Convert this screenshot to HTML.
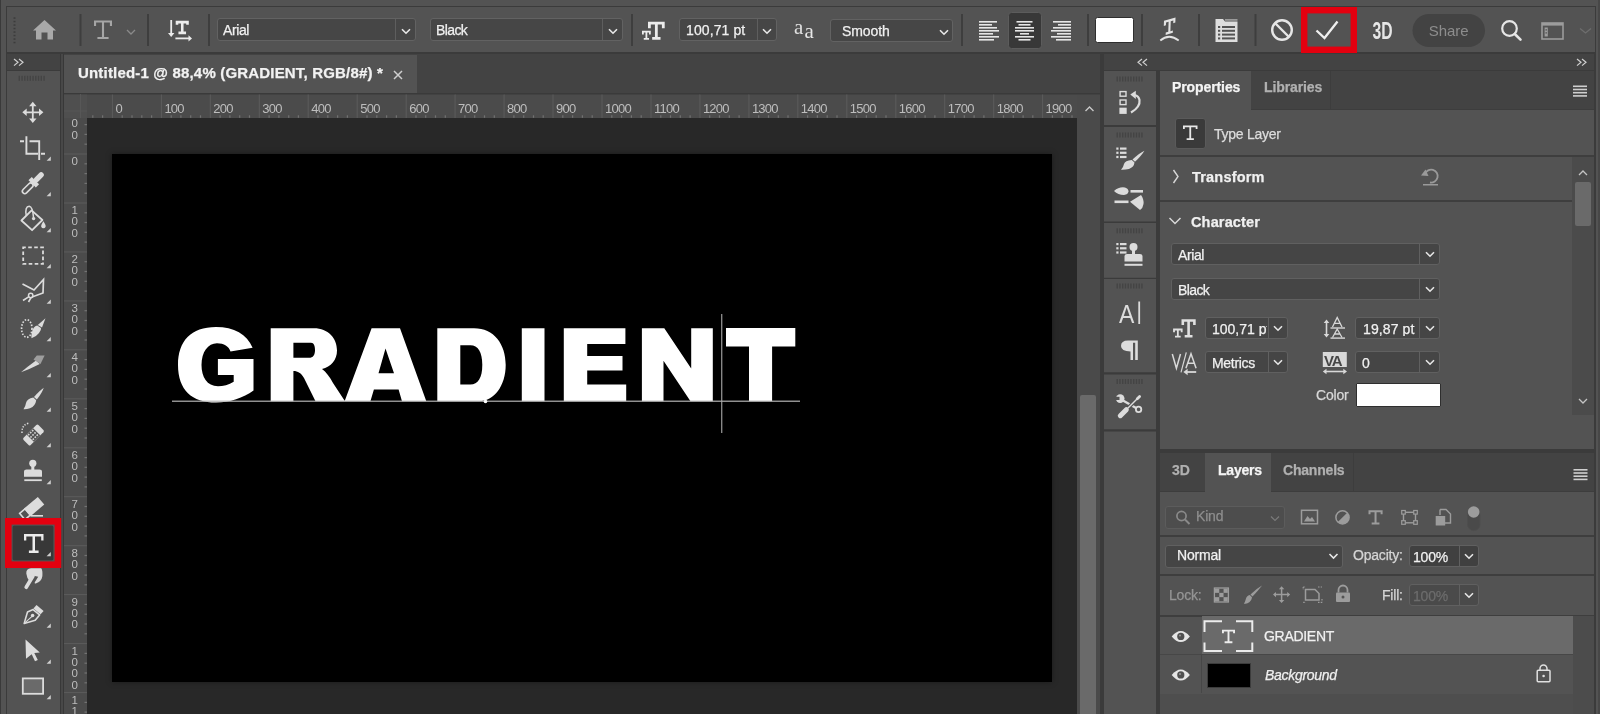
<!DOCTYPE html>
<html><head><meta charset="utf-8">
<style>
*{margin:0;padding:0;box-sizing:border-box}
html,body{width:1600px;height:714px;overflow:hidden;background:#535353;font-family:"Liberation Sans",sans-serif;color:#e0e0e0}
.a{position:absolute}
.dd{position:absolute;background:#464646;border:1px solid #626262;border-radius:3px}
.sep{position:absolute;width:2px;background:#3e3e3e}
.t{position:absolute;white-space:nowrap;line-height:1}
svg.a{overflow:visible}
.t,svg text{will-change:transform}
.t{-webkit-text-stroke:0.25px currentColor}
</style></head><body>
<div class="a" style="left:0;top:0;width:1px;height:714px;background:#3a3a3a"></div>
<div class="a" style="left:6px;top:6px;width:1590px;height:48px;background:#535353;border:1px solid #3b3b3b;border-bottom-width:2px"></div>
<div class="a" style="left:7px;top:54px;width:53px;height:16px;background:#434343"></div>
<div class="a" style="left:1104px;top:54px;width:490px;height:16px;background:#434343"></div>
<div class="a" style="left:6px;top:54px;width:1px;height:660px;background:#3b3b3b"></div>
<div class="a" style="left:60px;top:54px;width:4px;height:660px;background:#3b3b3b;border-left:1.5px solid #383838;border-right:0.8px solid #383838;background:#484848"></div>
<div class="a" style="left:1100px;top:54px;width:4px;height:660px;background:#3b3b3b"></div>
<div class="a" style="left:1156px;top:70px;width:4px;height:644px;background:#3b3b3b"></div>
<div class="a" style="left:1104px;top:70px;width:490px;height:1px;background:#3b3b3b"></div>
<div class="a" style="left:7px;top:70px;width:53px;height:1px;background:#3b3b3b"></div>
<div class="a" style="left:1594px;top:54px;width:2px;height:660px;background:#3b3b3b"></div>
<div class="a" style="left:1598px;top:0;width:2px;height:714px;background:#474747"></div>
<!-- DOCUMENT AREA -->
<div class="a" style="left:64px;top:54px;width:1036px;height:40px;background:#434343"></div>
<div class="a" style="left:64px;top:55px;width:353px;height:38px;background:#535353"></div>
<div class="a" style="left:64px;top:93px;width:1036px;height:1px;background:#3a3a3a"></div>
<div class="a" style="left:64px;top:94px;width:1013px;height:24px;background:#4b4b4b"></div>
<div class="a" style="left:64px;top:94px;width:23px;height:620px;background:#4b4b4b"></div>
<div class="a" style="left:87px;top:118px;width:990px;height:596px;background:#282828"></div>
<div class="a" style="left:1077px;top:94px;width:23px;height:620px;background:#4a4a4a"></div>
<div class="a" style="left:1080px;top:395px;width:16px;height:319px;background:#6a6a6a;border-radius:2px 2px 0 0"></div>
<div class="a" style="left:112px;top:154px;width:940px;height:528px;background:#000;box-shadow:0 0 6px rgba(0,0,0,.35)"></div>
<svg class="a" style="left:0;top:0" width="1600" height="60">
<rect x="13.5" y="17.3" width="2" height="1.5" fill="#3c3c3c"/>
<rect x="13.5" y="20.8" width="2" height="1.5" fill="#3c3c3c"/>
<rect x="13.5" y="24.3" width="2" height="1.5" fill="#3c3c3c"/>
<rect x="13.5" y="27.8" width="2" height="1.5" fill="#3c3c3c"/>
<rect x="13.5" y="31.3" width="2" height="1.5" fill="#3c3c3c"/>
<rect x="13.5" y="34.8" width="2" height="1.5" fill="#3c3c3c"/>
<rect x="13.5" y="38.3" width="2" height="1.5" fill="#3c3c3c"/>
<rect x="13.5" y="41.8" width="2" height="1.5" fill="#3c3c3c"/>
<path d="M44.5 20 L56 30.5 L53 30.5 L53 39.5 L47.5 39.5 L47.5 32.5 L41.5 32.5 L41.5 39.5 L36 39.5 L36 30.5 L33 30.5 Z" fill="#a9a9a9"/>
<rect x="79.5" y="14" width="2" height="32" fill="#3e3e3e"/>
<rect x="147" y="14" width="2" height="32" fill="#3e3e3e"/>
<rect x="208" y="14" width="2" height="32" fill="#3e3e3e"/>
<rect x="631" y="14" width="2" height="32" fill="#3e3e3e"/>
<rect x="961" y="14" width="2" height="32" fill="#3e3e3e"/>
<rect x="1087" y="14" width="2" height="32" fill="#3e3e3e"/>
<rect x="1141" y="14" width="2" height="32" fill="#3e3e3e"/>
<rect x="1198" y="14" width="2" height="32" fill="#3e3e3e"/>
<rect x="1254.5" y="14" width="2" height="32" fill="#3e3e3e"/>
<path d="M94 20.5H112V25.96H109.9V22.6H104.05V36.9H108.58V39H97.42V36.9H101.95V22.6H96.1V25.96H94Z" fill="#a6a6a6"/>
<path d="M127 30 L131 34 L135 30" stroke="#8a8a8a" stroke-width="1.3" fill="none"/>
<rect x="170.3" y="20" width="1.8" height="14" fill="#ececec"/><path d="M168 33 L174.4 33 L171.2 37 Z" fill="#ececec"/>
<path d="M175.7 20.8H188.8V24.700000000000003H186.20000000000002V23.400000000000002H183.55V31.6H186.049V34.2H178.451V31.6H180.95V23.400000000000002H178.29999999999998V24.700000000000003H175.7Z" fill="#ececec"/>
<rect x="175.4" y="37.5" width="14" height="1.8" fill="#ececec"/><path d="M188.5 35.3 L192 38.4 L188.5 41.5 Z" fill="#ececec"/>
<path d="M648 21.8H664.7V28.240000000000002H661.9000000000001V24.6H657.75V37.0H660.5250000000001V39.8H652.175V37.0H654.95V24.6H650.8V28.240000000000002H648Z" fill="#ececec"/>
<path d="M642 30.8H650.8V34.4H649.0V32.6H647.3V38.0H649.04V39.8H643.76V38.0H645.5V32.6H643.8V34.4H642Z" fill="#ececec"/>
<rect x="1008.5" y="12.5" width="33" height="36" rx="3" fill="#383838" stroke="#5c5c5c" stroke-width="1"/>
<rect x="979" y="21.0" width="18" height="1.6" fill="#e6e6e6"/><rect x="979" y="24.0" width="13" height="1.6" fill="#e6e6e6"/><rect x="979" y="27.0" width="18" height="1.6" fill="#e6e6e6"/><rect x="979" y="30.0" width="20" height="1.6" fill="#e6e6e6"/><rect x="979" y="33.0" width="14" height="1.6" fill="#e6e6e6"/><rect x="979" y="36.0" width="20" height="1.6" fill="#e6e6e6"/><rect x="979" y="39.0" width="15" height="1.6" fill="#e6e6e6"/>
<rect x="1016.5" y="21.0" width="16" height="1.6" fill="#e6e6e6"/><rect x="1018.5" y="24.0" width="12" height="1.6" fill="#e6e6e6"/><rect x="1015" y="27.0" width="19" height="1.6" fill="#e6e6e6"/><rect x="1015" y="30.0" width="19" height="1.6" fill="#e6e6e6"/><rect x="1020" y="33.0" width="9" height="1.6" fill="#e6e6e6"/><rect x="1015" y="36.0" width="19" height="1.6" fill="#e6e6e6"/><rect x="1018.5" y="39.0" width="12" height="1.6" fill="#e6e6e6"/>
<rect x="1053" y="21.0" width="18" height="1.6" fill="#e6e6e6"/><rect x="1058" y="24.0" width="13" height="1.6" fill="#e6e6e6"/><rect x="1053" y="27.0" width="18" height="1.6" fill="#e6e6e6"/><rect x="1051" y="30.0" width="20" height="1.6" fill="#e6e6e6"/><rect x="1057" y="33.0" width="14" height="1.6" fill="#e6e6e6"/><rect x="1051" y="36.0" width="20" height="1.6" fill="#e6e6e6"/><rect x="1056" y="39.0" width="15" height="1.6" fill="#e6e6e6"/>
<rect x="1095.5" y="17.5" width="38" height="25" rx="2" fill="#ffffff" stroke="#2e2e2e" stroke-width="1"/>
<path transform="translate(1169.5 26.5) rotate(-16) skewX(-18) translate(-1169.5 -26.5)" d="M1163.5 19.5H1175.5V24.34H1173.3V21.7H1170.6V31.3H1173.22V33.5H1165.78V31.3H1168.4V21.7H1165.7V24.34H1163.5Z" fill="#e3e3e3"/>
<path d="M1160.3 40.5 Q1169 33 1178.7 40.5" stroke="#e3e3e3" stroke-width="1.8" fill="none"/>
<path d="M1215.5 19 L1223 19 L1225 21.5 L1237.5 21.5 L1237.5 42 L1215.5 42 Z" fill="#dedede"/>
<rect x="1225" y="19" width="12.5" height="1.8" fill="#9a9a9a"/>
<rect x="1218" y="26.0" width="2.2" height="2" fill="#535353"/><rect x="1222" y="26.0" width="13" height="2" fill="#535353"/>
<rect x="1218" y="29.8" width="2.2" height="2" fill="#535353"/><rect x="1222" y="29.8" width="13" height="2" fill="#535353"/>
<rect x="1218" y="33.6" width="2.2" height="2" fill="#535353"/><rect x="1222" y="33.6" width="13" height="2" fill="#535353"/>
<rect x="1218" y="37.4" width="2.2" height="2" fill="#535353"/><rect x="1222" y="37.4" width="13" height="2" fill="#535353"/>
<circle cx="1282" cy="30" r="9.8" stroke="#e6e6e6" stroke-width="2.4" fill="none"/><path d="M1275.5 23.5 L1288.5 36.5" stroke="#e6e6e6" stroke-width="2.4"/>
<rect x="1304.2" y="10.2" width="49.6" height="39.6" fill="none" stroke="#e3000f" stroke-width="6.4"/>
<path d="M1316.5 30.5 L1324.5 38 L1337.5 21.5" stroke="#f0f0f0" stroke-width="2.3" fill="none"/>
<text x="0" y="0" font-family="Liberation Sans" font-weight="bold" font-size="24.5" fill="#e6e6e6" transform="translate(1372.5 39.2) scale(0.64 1)">3D</text>
<rect x="1412.5" y="14" width="72.5" height="33" rx="16.5" fill="#434343"/>
<text x="1448.7" y="35.5" text-anchor="middle" font-family="Liberation Sans" font-size="15" fill="#8d8d8d">Share</text>
<circle cx="1509.5" cy="28.5" r="7.3" stroke="#e6e6e6" stroke-width="2.2" fill="none"/><path d="M1514.8 34 L1520.5 39.7" stroke="#e6e6e6" stroke-width="2.6" stroke-linecap="round"/>
<rect x="1542" y="23" width="21" height="16" stroke="#9c9c9c" stroke-width="1.6" fill="none"/><rect x="1542" y="23" width="21" height="2.6" fill="#9c9c9c"/><rect x="1544.6" y="27.5" width="3.2" height="9" fill="#9c9c9c"/><rect x="1545.4" y="29.3" width="1.6" height="1.2" fill="#535353"/><rect x="1545.4" y="32.3" width="1.6" height="1.2" fill="#535353"/>
<path d="M1580 28.5 L1585.5 33 L1591 28.5" stroke="#6e6e6e" stroke-width="1.3" fill="none"/>
</svg>
<div class="dd" style="left:217px;top:18px;width:199px;height:23px"></div><div class="a" style="left:395px;top:19px;width:1px;height:21px;background:#5e5e5e"></div><div class="t" style="left:223px;top:23.0px;font-size:14px;letter-spacing:-0.4px;color:#f0f0f0">Arial</div><svg class="a" style="left:400.5px;top:28px" width="10" height="7"><path d="M1 1.2 L5 5.2 L9 1.2" stroke="#e8e8e8" stroke-width="1.6" fill="none"/></svg>
<div class="dd" style="left:430px;top:18px;width:193px;height:23px"></div><div class="a" style="left:602px;top:19px;width:1px;height:21px;background:#5e5e5e"></div><div class="t" style="left:436px;top:23.0px;font-size:14px;letter-spacing:-0.6px;color:#f0f0f0">Black</div><svg class="a" style="left:607.5px;top:28px" width="10" height="7"><path d="M1 1.2 L5 5.2 L9 1.2" stroke="#e8e8e8" stroke-width="1.6" fill="none"/></svg>
<div class="dd" style="left:679px;top:18px;width:98px;height:23px"></div><div class="a" style="left:757px;top:19px;width:1px;height:21px;background:#5e5e5e"></div><div class="t" style="left:686px;top:23.0px;font-size:14px;letter-spacing:0.1px;color:#f0f0f0">100,71 pt</div><svg class="a" style="left:762px;top:28px" width="10" height="7"><path d="M1 1.2 L5 5.2 L9 1.2" stroke="#e8e8e8" stroke-width="1.6" fill="none"/></svg>
<div class="dd" style="left:830px;top:19px;width:123px;height:23px"></div><div class="t" style="left:842px;top:24.0px;font-size:14px;letter-spacing:-0.1px;color:#f0f0f0">Smooth</div><svg class="a" style="left:938.5px;top:29px" width="10" height="7"><path d="M1 1.2 L5 5.2 L9 1.2" stroke="#e8e8e8" stroke-width="1.6" fill="none"/></svg>
<svg class="a" style="left:0;top:0" width="900" height="60"><text x="794" y="33.7" font-family="Liberation Serif" font-size="21" fill="#e0e0e0">a</text><text x="804.6" y="38" font-family="Liberation Serif" font-size="21" fill="#e8e8e8">a</text></svg><svg class="a" style="left:0;top:0" width="1600" height="714">
<path d="M1142 59 L1138 62.3 L1142 65.6 M1147 59 L1143 62.3 L1147 65.6" stroke="#d0d0d0" stroke-width="1.2" fill="none"/>
<path d="M1577 59 L1581 62.3 L1577 65.6 M1582 59 L1586 62.3 L1582 65.6" stroke="#d0d0d0" stroke-width="1.2" fill="none"/>
<rect x="1104" y="125" width="52" height="2" fill="#3b3b3b"/>
<rect x="1104" y="221.5" width="52" height="1.5" fill="#3b3b3b"/>
<rect x="1104" y="277.8" width="52" height="1.1999999999999886" fill="#3b3b3b"/>
<rect x="1104" y="372.3" width="52" height="2.1999999999999886" fill="#3b3b3b"/>
<rect x="1104" y="429.3" width="52" height="2.1999999999999886" fill="#3b3b3b"/>
<rect x="1116.50" y="76.5" width="1.4" height="5" fill="#444444"/><rect x="1119.25" y="76.5" width="1.4" height="5" fill="#444444"/><rect x="1122.00" y="76.5" width="1.4" height="5" fill="#444444"/><rect x="1124.75" y="76.5" width="1.4" height="5" fill="#444444"/><rect x="1127.50" y="76.5" width="1.4" height="5" fill="#444444"/><rect x="1130.25" y="76.5" width="1.4" height="5" fill="#444444"/><rect x="1133.00" y="76.5" width="1.4" height="5" fill="#444444"/><rect x="1135.75" y="76.5" width="1.4" height="5" fill="#444444"/><rect x="1138.50" y="76.5" width="1.4" height="5" fill="#444444"/><rect x="1141.25" y="76.5" width="1.4" height="5" fill="#444444"/>
<rect x="1116.50" y="132.5" width="1.4" height="5" fill="#444444"/><rect x="1119.25" y="132.5" width="1.4" height="5" fill="#444444"/><rect x="1122.00" y="132.5" width="1.4" height="5" fill="#444444"/><rect x="1124.75" y="132.5" width="1.4" height="5" fill="#444444"/><rect x="1127.50" y="132.5" width="1.4" height="5" fill="#444444"/><rect x="1130.25" y="132.5" width="1.4" height="5" fill="#444444"/><rect x="1133.00" y="132.5" width="1.4" height="5" fill="#444444"/><rect x="1135.75" y="132.5" width="1.4" height="5" fill="#444444"/><rect x="1138.50" y="132.5" width="1.4" height="5" fill="#444444"/><rect x="1141.25" y="132.5" width="1.4" height="5" fill="#444444"/>
<rect x="1116.50" y="228.3" width="1.4" height="5" fill="#444444"/><rect x="1119.25" y="228.3" width="1.4" height="5" fill="#444444"/><rect x="1122.00" y="228.3" width="1.4" height="5" fill="#444444"/><rect x="1124.75" y="228.3" width="1.4" height="5" fill="#444444"/><rect x="1127.50" y="228.3" width="1.4" height="5" fill="#444444"/><rect x="1130.25" y="228.3" width="1.4" height="5" fill="#444444"/><rect x="1133.00" y="228.3" width="1.4" height="5" fill="#444444"/><rect x="1135.75" y="228.3" width="1.4" height="5" fill="#444444"/><rect x="1138.50" y="228.3" width="1.4" height="5" fill="#444444"/><rect x="1141.25" y="228.3" width="1.4" height="5" fill="#444444"/>
<rect x="1116.50" y="283.5" width="1.4" height="5" fill="#444444"/><rect x="1119.25" y="283.5" width="1.4" height="5" fill="#444444"/><rect x="1122.00" y="283.5" width="1.4" height="5" fill="#444444"/><rect x="1124.75" y="283.5" width="1.4" height="5" fill="#444444"/><rect x="1127.50" y="283.5" width="1.4" height="5" fill="#444444"/><rect x="1130.25" y="283.5" width="1.4" height="5" fill="#444444"/><rect x="1133.00" y="283.5" width="1.4" height="5" fill="#444444"/><rect x="1135.75" y="283.5" width="1.4" height="5" fill="#444444"/><rect x="1138.50" y="283.5" width="1.4" height="5" fill="#444444"/><rect x="1141.25" y="283.5" width="1.4" height="5" fill="#444444"/>
<rect x="1116.50" y="379.0" width="1.4" height="5" fill="#444444"/><rect x="1119.25" y="379.0" width="1.4" height="5" fill="#444444"/><rect x="1122.00" y="379.0" width="1.4" height="5" fill="#444444"/><rect x="1124.75" y="379.0" width="1.4" height="5" fill="#444444"/><rect x="1127.50" y="379.0" width="1.4" height="5" fill="#444444"/><rect x="1130.25" y="379.0" width="1.4" height="5" fill="#444444"/><rect x="1133.00" y="379.0" width="1.4" height="5" fill="#444444"/><rect x="1135.75" y="379.0" width="1.4" height="5" fill="#444444"/><rect x="1138.50" y="379.0" width="1.4" height="5" fill="#444444"/><rect x="1141.25" y="379.0" width="1.4" height="5" fill="#444444"/>
<rect x="1120.1" y="91.6" width="5.9" height="4.6" stroke="#dcdcdc" stroke-width="1.4" fill="none"/><rect x="1120.1" y="100" width="5.9" height="4.6" stroke="#dcdcdc" stroke-width="1.4" fill="none"/><rect x="1119.4" y="107.7" width="7.3" height="6.2" fill="#dcdcdc"/>
<path d="M1131 112.5 Q1140.5 107 1139.5 100 Q1138.8 96 1134.5 95" stroke="#dcdcdc" stroke-width="2.2" fill="none"/><path d="M1130.3 94.5 L1135.8 90.8 L1135.8 99 Z" fill="#dcdcdc"/>
<rect x="1116.3" y="147.5" width="2.2" height="2.2" fill="#dcdcdc"/><rect x="1120" y="147.5" width="6.5" height="2.2" fill="#dcdcdc"/>
<rect x="1116.3" y="151.7" width="2.2" height="2.2" fill="#dcdcdc"/><rect x="1120" y="151.7" width="6.5" height="2.2" fill="#dcdcdc"/>
<rect x="1116.3" y="155.9" width="2.2" height="2.2" fill="#dcdcdc"/><rect x="1120" y="155.9" width="6.5" height="2.2" fill="#dcdcdc"/>
<path d="M1144.4 150.7 Q1142 155 1135 161.8 L1132.5 159.5 Q1139.5 153 1144.4 150.7Z" fill="#dcdcdc"/><path d="M1131.8 160 L1134.5 162.5 Q1134 167 1129 169 Q1125 170 1121 169.8 Q1123.5 167 1124 164 Q1125 160.5 1131.8 160Z" fill="#dcdcdc"/>
<path d="M1114 191 Q1119 186.5 1125 187.5 Q1128.5 188.5 1128.5 191.5 Q1128 194.5 1124 195 Q1118 195 1114 191Z" fill="#dcdcdc"/><rect x="1130.5" y="190" width="12.5" height="2.6" fill="#dcdcdc"/>
<rect x="1114.5" y="200.5" width="14" height="2.6" fill="#dcdcdc"/><path d="M1130 201.8 L1141 195 Q1144 199 1143.5 204 Q1143 208 1140 210 Z" fill="#dcdcdc"/>
<rect x="1116.3" y="243.0" width="2.2" height="2.2" fill="#dcdcdc"/><rect x="1120" y="243.0" width="6.5" height="2.2" fill="#dcdcdc"/>
<rect x="1116.3" y="247.2" width="2.2" height="2.2" fill="#dcdcdc"/><rect x="1120" y="247.2" width="6.5" height="2.2" fill="#dcdcdc"/>
<rect x="1116.3" y="251.4" width="2.2" height="2.2" fill="#dcdcdc"/><rect x="1120" y="251.4" width="6.5" height="2.2" fill="#dcdcdc"/>
<circle cx="1133.5" cy="247" r="4" fill="#dcdcdc"/><rect x="1132" y="249" width="3" height="5" fill="#dcdcdc"/><path d="M1124.5 256.5 Q1124.5 254 1127 254 H1140 Q1142.5 254 1142.5 256.5 V261.5 H1124.5Z" fill="#dcdcdc"/><rect x="1124.5" y="263.8" width="18" height="2" fill="#dcdcdc"/>
<text x="1119" y="323" font-family="Liberation Sans" font-size="27" fill="#dcdcdc" transform="translate(1119 323) scale(0.85 0.96) translate(-1119 -323)">A</text><rect x="1138.3" y="301.5" width="1.8" height="22.5" fill="#dcdcdc"/>
<path d="M1128 340.5 H1137.8 V360 H1135.2 V342.8 H1133 V360 H1130.5 V351.5 Q1121 351 1121 346 Q1121 340.5 1128 340.5Z" fill="#dcdcdc"/>
<path d="M1123 400.5 L1136.5 408.3" stroke="#dcdcdc" stroke-width="2.4"/><circle cx="1120.2" cy="398.6" r="4.3" fill="#dcdcdc"/><path d="M1114.5 396.8 H1119.5 V400 H1114.5Z" fill="#535353"/><circle cx="1138.6" cy="409.4" r="2.7" stroke="#dcdcdc" stroke-width="1.8" fill="#535353"/>
<path d="M1127.5 408.5 L1139.3 396.7" stroke="#535353" stroke-width="3.8"/><path d="M1127 409 L1139 397" stroke="#dcdcdc" stroke-width="1.5"/><path d="M1137.3 398.7 L1139.6 396.4" stroke="#dcdcdc" stroke-width="2.8" stroke-linecap="round"/><path d="M1120.3 415.7 L1126.3 409.7" stroke="#dcdcdc" stroke-width="5" stroke-linecap="round"/>
</svg>
<div class="a" style="left:1160px;top:71px;width:434px;height:38px;background:#434343"></div>
<div class="a" style="left:1160px;top:71px;width:91px;height:39px;background:#535353"></div>
<div class="a" style="left:1330px;top:71px;width:1px;height:38px;background:#3d3d3d"></div>
<div class="a" style="left:1160px;top:109px;width:434px;height:1px;background:#3d3d3d"></div>
<div class="a" style="left:1160px;top:109px;width:91px;height:1px;background:#535353"></div>
<div class="t" style="left:1172px;top:80px;font-size:14px;font-weight:bold;color:#f4f4f4;letter-spacing:-0.1px">Properties</div>
<div class="t" style="left:1264px;top:80px;font-size:14px;font-weight:bold;color:#b0b0b0;letter-spacing:-0.1px">Libraries</div>
<div class="a" style="left:1174.5px;top:118px;width:31px;height:31px;background:#3a3a3a;border:1px solid #5a5a5a;border-radius:3px"></div>
<div class="t" style="left:1214px;top:127px;font-size:14px;color:#dcdcdc;letter-spacing:-0.25px">Type Layer</div>
<div class="a" style="left:1160px;top:155px;width:434px;height:1.5px;background:#3e3e3e"></div>
<div class="t" style="left:1192px;top:169.5px;font-size:14.5px;font-weight:bold;color:#f0f0f0;letter-spacing:0.2px">Transform</div>
<div class="a" style="left:1160px;top:200px;width:412px;height:1.5px;background:#3e3e3e"></div>
<div class="t" style="left:1191px;top:214.5px;font-size:14.5px;font-weight:bold;color:#f0f0f0;letter-spacing:0.15px">Character</div>
<div class="a" style="left:1572px;top:157px;width:22px;height:258px;background:#4b4b4b"></div>
<div class="a" style="left:1575px;top:182px;width:16px;height:44px;background:#6a6a6a;border-radius:2px"></div>
<div class="a" style="left:1160px;top:449px;width:434px;height:4px;background:#3b3b3b"></div>
<div class="a" style="left:1171px;top:243px;width:269px;height:22px;background:#454545;border:1px solid #606060;border-radius:3px"></div><div class="a" style="left:1419px;top:244px;width:1px;height:20px;background:#606060"></div><div class="t" style="left:1177.5px;top:247.8px;width:300px;overflow:hidden;font-size:14px;letter-spacing:-0.4px;color:#f0f0f0">Arial</div><svg class="a" style="left:1424.5px;top:251.0px" width="10" height="7"><path d="M1 1.2 L5 5.2 L9 1.2" stroke="#e6e6e6" stroke-width="1.6" fill="none"/></svg>
<div class="a" style="left:1171px;top:278px;width:269px;height:22px;background:#454545;border:1px solid #606060;border-radius:3px"></div><div class="a" style="left:1419px;top:279px;width:1px;height:20px;background:#606060"></div><div class="t" style="left:1177.5px;top:282.8px;width:300px;overflow:hidden;font-size:14px;letter-spacing:-0.6px;color:#f0f0f0">Black</div><svg class="a" style="left:1424.5px;top:286.0px" width="10" height="7"><path d="M1 1.2 L5 5.2 L9 1.2" stroke="#e6e6e6" stroke-width="1.6" fill="none"/></svg>
<div class="a" style="left:1205px;top:317px;width:83px;height:22px;background:#454545;border:1px solid #606060;border-radius:3px"></div><div class="a" style="left:1268px;top:318px;width:1px;height:20px;background:#606060"></div><div class="t" style="left:1211.5px;top:321.8px;width:54.5px;overflow:hidden;font-size:14px;letter-spacing:0px;color:#f0f0f0">100,71 pt</div><svg class="a" style="left:1273.0px;top:325.0px" width="10" height="7"><path d="M1 1.2 L5 5.2 L9 1.2" stroke="#e6e6e6" stroke-width="1.6" fill="none"/></svg>
<div class="a" style="left:1355px;top:317px;width:85px;height:22px;background:#454545;border:1px solid #606060;border-radius:3px"></div><div class="a" style="left:1419px;top:318px;width:1px;height:20px;background:#606060"></div><div class="t" style="left:1362.5px;top:321.8px;width:300px;overflow:hidden;font-size:14px;letter-spacing:0.1px;color:#f0f0f0">19,87 pt</div><svg class="a" style="left:1424.5px;top:325.0px" width="10" height="7"><path d="M1 1.2 L5 5.2 L9 1.2" stroke="#e6e6e6" stroke-width="1.6" fill="none"/></svg>
<div class="a" style="left:1205px;top:351px;width:83px;height:22px;background:#454545;border:1px solid #606060;border-radius:3px"></div><div class="a" style="left:1268px;top:352px;width:1px;height:20px;background:#606060"></div><div class="t" style="left:1211.5px;top:355.8px;width:300px;overflow:hidden;font-size:14px;letter-spacing:-0.3px;color:#f0f0f0">Metrics</div><svg class="a" style="left:1273.0px;top:359.0px" width="10" height="7"><path d="M1 1.2 L5 5.2 L9 1.2" stroke="#e6e6e6" stroke-width="1.6" fill="none"/></svg>
<div class="a" style="left:1355px;top:351px;width:85px;height:22px;background:#454545;border:1px solid #606060;border-radius:3px"></div><div class="a" style="left:1419px;top:352px;width:1px;height:20px;background:#606060"></div><div class="t" style="left:1362px;top:355.8px;width:300px;overflow:hidden;font-size:14px;letter-spacing:0px;color:#f0f0f0">0</div><svg class="a" style="left:1424.5px;top:359.0px" width="10" height="7"><path d="M1 1.2 L5 5.2 L9 1.2" stroke="#e6e6e6" stroke-width="1.6" fill="none"/></svg>
<div class="t" style="left:1316px;top:388px;font-size:14px;color:#d8d8d8;letter-spacing:-0.2px">Color</div>
<div class="a" style="left:1355.5px;top:382.5px;width:85px;height:24px;background:#fff;border:1px solid #2e2e2e;border-radius:1px"></div>
<svg class="a" style="left:0;top:0" width="1600" height="714">
<rect x="1573" y="85.5" width="14" height="1.6" fill="#cfcfcf"/>
<rect x="1573" y="88.7" width="14" height="1.6" fill="#cfcfcf"/>
<rect x="1573" y="91.9" width="14" height="1.6" fill="#cfcfcf"/>
<rect x="1573" y="95.1" width="14" height="1.6" fill="#cfcfcf"/>
<path d="M1183 125.5H1197.5V129.1H1195.7V127.3H1191.15V138.2H1193.875V140H1186.625V138.2H1189.35V127.3H1184.8V129.1H1183Z" fill="#e8e8e8"/>
<path d="M1173.5 170 L1178 176.5 L1173.5 183" stroke="#d8d8d8" stroke-width="1.4" fill="none"/>
<path d="M1169.5 218 L1175 223.5 L1180.5 218" stroke="#d8d8d8" stroke-width="1.5" fill="none"/>
<path d="M1425 174 A6.5 6.5 0 1 1 1430 182.5" stroke="#9a9a9a" stroke-width="1.8" fill="none"/><path d="M1421 175.5 L1425.5 169.5 L1428.5 176 Z" fill="#9a9a9a"/><rect x="1423" y="184" width="15" height="1.5" fill="#9a9a9a"/>
<path d="M1579 175 L1583 171 L1587 175" stroke="#c4c4c4" stroke-width="1.3" fill="none"/>
<path d="M1579 399 L1583 403 L1587 399" stroke="#c4c4c4" stroke-width="1.3" fill="none"/>
<path d="M1181.5 319.2H1195.7V324.92H1193.1000000000001V321.8H1189.8999999999999V335.0H1192.5049999999999V337.6H1184.695V335.0H1187.3V321.8H1184.1V324.92H1181.5Z" fill="#e0e0e0"/>
<path d="M1173.1 328.6H1182.6V332.20000000000005H1180.8V330.40000000000003H1178.75V335.8H1180.6999999999998V337.6H1175.0V335.8H1176.9499999999998V330.40000000000003H1174.8999999999999V332.20000000000005H1173.1Z" fill="#e0e0e0"/>
<path d="M1172.3 354 L1176.4 368.3 L1180.5 354" stroke="#d8d8d8" stroke-width="1.5" fill="none"/><path d="M1186.3 352.3 L1181 372.3" stroke="#d8d8d8" stroke-width="1.2"/><path d="M1185.9 368.3 L1191 353.8 L1196.1 368.3 M1187.6 363.3 H1194.4" stroke="#d8d8d8" stroke-width="1.5" fill="none"/>
<path d="M1186.5 372 H1196.2" stroke="#d8d8d8" stroke-width="1.8"/><path d="M1183.4 372 L1187.6 368.8 L1187.6 375.2Z" fill="#d8d8d8"/>
<path d="M1326.5 321 V336" stroke="#d8d8d8" stroke-width="1.6"/><path d="M1323.7 323 L1326.5 319.5 L1329.3 323Z M1323.7 334 L1326.5 337.5 L1329.3 334Z" fill="#d8d8d8"/>
<path d="M1332.5 327 L1337.2 317.5 L1342 327 M1334.5 323.3 H1340 M1332.5 337.5 L1337.2 329 L1342 337.5 M1334.5 334 H1340" stroke="#d8d8d8" stroke-width="1.3" fill="none"/><rect x="1330.5" y="327.3" width="14.5" height="1.4" fill="#d8d8d8"/><rect x="1330.5" y="337.4" width="14.5" height="1.4" fill="#d8d8d8"/>
<rect x="1322.8" y="352" width="24" height="15" fill="#d8d8d8"/><text x="1324" y="365.5" font-family="Liberation Sans" font-weight="bold" font-size="15" fill="#454545" letter-spacing="-1.2">VA</text>
<path d="M1325 371.5 H1345" stroke="#d8d8d8" stroke-width="1.6"/><path d="M1322.8 371.5 L1326.5 368.7 L1326.5 374.3Z M1347 371.5 L1343.3 368.7 L1343.3 374.3Z" fill="#d8d8d8"/>
</svg>
<div class="a" style="left:1160px;top:453px;width:434px;height:38px;background:#434343"></div>
<div class="a" style="left:1205px;top:453px;width:65.5px;height:39px;background:#535353"></div>
<div class="a" style="left:1353px;top:453px;width:1px;height:38px;background:#3d3d3d"></div>
<div class="a" style="left:1160px;top:491px;width:434px;height:1px;background:#3d3d3d"></div>
<div class="a" style="left:1205px;top:491px;width:65.5px;height:1px;background:#535353"></div>
<div class="t" style="left:1172px;top:463px;font-size:14px;font-weight:bold;color:#b0b0b0">3D</div>
<div class="t" style="left:1217.5px;top:463px;font-size:14px;font-weight:bold;color:#f4f4f4;letter-spacing:-0.2px">Layers</div>
<div class="t" style="left:1283px;top:463px;font-size:14px;font-weight:bold;color:#b0b0b0;letter-spacing:-0.2px">Channels</div>
<div class="a" style="left:1164.5px;top:505.5px;width:120px;height:23px;background:#4d4d4d;border:1px solid #5c5c5c;border-radius:3px"></div>
<div class="t" style="left:1196px;top:509px;font-size:14px;color:#8e8e8e;letter-spacing:-0.2px">Kind</div>
<div class="a" style="left:1160px;top:535px;width:434px;height:1.5px;background:#3e3e3e"></div>
<div class="a" style="left:1160px;top:574px;width:434px;height:1.5px;background:#3e3e3e"></div>
<div class="a" style="left:1164.5px;top:544.5px;width:178.5px;height:23px;background:#454545;border:1px solid #606060;border-radius:3px"></div>
<div class="t" style="left:1176.5px;top:548px;font-size:14px;color:#f0f0f0;letter-spacing:-0.2px">Normal</div>
<div class="t" style="left:1353px;top:548px;font-size:14px;color:#d4d4d4;letter-spacing:-0.2px">Opacity:</div>
<div class="a" style="left:1409px;top:545px;width:70px;height:22px;background:#404040;border:1px solid #606060;border-radius:3px"></div><div class="a" style="left:1458.5px;top:546px;width:1px;height:20px;background:#606060"></div><div class="t" style="left:1413px;top:549.8px;width:300px;overflow:hidden;font-size:14px;letter-spacing:-0.2px;color:#f0f0f0">100%</div><svg class="a" style="left:1463.8px;top:553.0px" width="10" height="7"><path d="M1 1.2 L5 5.2 L9 1.2" stroke="#e6e6e6" stroke-width="1.6" fill="none"/></svg>
<div class="t" style="left:1168.5px;top:587.5px;font-size:14px;color:#959595;letter-spacing:-0.2px">Lock:</div>
<div class="t" style="left:1382px;top:587.5px;font-size:14px;color:#d4d4d4;letter-spacing:-0.2px">Fill:</div>
<div class="a" style="left:1409px;top:584px;width:70px;height:22px;background:#4a4a4a;border:1px solid #606060;border-radius:3px"></div><div class="a" style="left:1458.5px;top:585px;width:1px;height:20px;background:#606060"></div><div class="t" style="left:1413px;top:588.8px;width:300px;overflow:hidden;font-size:14px;letter-spacing:-0.2px;color:#6c6c6c">100%</div><svg class="a" style="left:1463.8px;top:592.0px" width="10" height="7"><path d="M1 1.2 L5 5.2 L9 1.2" stroke="#e6e6e6" stroke-width="1.6" fill="none"/></svg>
<div class="a" style="left:1160px;top:615px;width:434px;height:1.5px;background:#3e3e3e"></div>
<div class="a" style="left:1201.5px;top:616px;width:371px;height:38px;background:#6a6a6a"></div>
<div class="a" style="left:1160px;top:653.7px;width:413px;height:1.5px;background:#474747"></div>
<div class="a" style="left:1200.5px;top:655px;width:1px;height:38px;background:#474747"></div>
<div class="a" style="left:1160px;top:694px;width:413px;height:20px;background:#4e4e4e"></div>
<div class="a" style="left:1572.5px;top:616px;width:21.5px;height:98px;background:#4c4c4c"></div>
<div class="t" style="left:1264px;top:629px;font-size:14px;color:#f0f0f0;letter-spacing:-0.3px">GRADIENT</div>
<div class="t" style="left:1264.5px;top:668px;font-size:14px;font-style:italic;color:#f0f0f0;letter-spacing:-0.3px">Background</div>
<div class="a" style="left:1206.5px;top:662.5px;width:44px;height:25px;background:#000;border:1px solid #3c3c3c"></div>
<svg class="a" style="left:0;top:0" width="1600" height="714">
<rect x="1573.5" y="469.0" width="14" height="1.6" fill="#cfcfcf"/>
<rect x="1573.5" y="472.2" width="14" height="1.6" fill="#cfcfcf"/>
<rect x="1573.5" y="475.4" width="14" height="1.6" fill="#cfcfcf"/>
<rect x="1573.5" y="478.6" width="14" height="1.6" fill="#cfcfcf"/>
<circle cx="1181.5" cy="516" r="4.6" stroke="#8a8a8a" stroke-width="1.7" fill="none"/><path d="M1185 519.5 L1189.5 524" stroke="#8a8a8a" stroke-width="2"/>
<path d="M1271 516.5 L1275 520.5 L1279 516.5" stroke="#7a7a7a" stroke-width="1.2" fill="none"/>
<path d="M1329.5 554 L1333.5 558 L1337.5 554" stroke="#e6e6e6" stroke-width="1.6" fill="none"/>
<rect x="1301.5" y="510.3" width="16" height="13.5" stroke="#9c9c9c" stroke-width="1.5" fill="none"/><path d="M1304 521.5 L1307.5 516 L1310 519 L1312 517 L1315 521.5Z" fill="#9c9c9c"/>
<circle cx="1342.5" cy="517.4" r="6.6" stroke="#9c9c9c" stroke-width="1.5" fill="none"/><path d="M1347.2 512.7 A6.6 6.6 0 0 1 1337.8 522.1Z" fill="#9c9c9c"/>
<path d="M1368.5 510.3H1382.6V514.3H1380.6V512.3H1376.55V522.5H1379.4275V524.5H1371.6725V522.5H1374.55V512.3H1370.5V514.3H1368.5Z" fill="#9c9c9c"/>
<rect x="1403.5" y="512.3" width="12" height="10.5" stroke="#9c9c9c" stroke-width="1.4" fill="none"/><rect x="1401.7" y="510.5" width="3.6" height="3.6" fill="#535353" stroke="#9c9c9c" stroke-width="1.2"/><rect x="1401.7" y="520.7" width="3.6" height="3.6" fill="#535353" stroke="#9c9c9c" stroke-width="1.2"/><rect x="1413.7" y="510.5" width="3.6" height="3.6" fill="#535353" stroke="#9c9c9c" stroke-width="1.2"/><rect x="1413.7" y="520.7" width="3.6" height="3.6" fill="#535353" stroke="#9c9c9c" stroke-width="1.2"/>
<path d="M1440 509.5 H1446 L1450.5 514 V523 H1445" stroke="#9c9c9c" stroke-width="1.4" fill="none"/><path d="M1440 509.5 V515" stroke="#9c9c9c" stroke-width="1.4"/><rect x="1435.7" y="516" width="9.5" height="9.5" fill="#9c9c9c"/>
<rect x="1467.5" y="509" width="12.5" height="21.5" rx="6.25" fill="#4a4a4a" stroke="#4e4e4e"/><circle cx="1473.7" cy="512" r="5.8" fill="#9c9c9c"/>
<rect x="1214.4" y="588" width="14" height="14" fill="none" stroke="#9c9c9c" stroke-width="1.3"/><rect x="1215.00" y="588.60" width="4.27" height="4.27" fill="#9c9c9c"/><rect x="1215.00" y="597.14" width="4.27" height="4.27" fill="#9c9c9c"/><rect x="1219.27" y="592.87" width="4.27" height="4.27" fill="#9c9c9c"/><rect x="1223.54" y="588.60" width="4.27" height="4.27" fill="#9c9c9c"/><rect x="1223.54" y="597.14" width="4.27" height="4.27" fill="#9c9c9c"/>
<path d="M1262 585.6 Q1258 591 1252.5 596.5 L1250.5 594.5 Q1256 589 1262 585.6Z" fill="#9c9c9c"/><path d="M1249.8 595 L1252 597.3 Q1251.5 601.5 1247.5 603.2 Q1245.5 603.8 1243.8 603.8 Q1245.3 601.5 1245.7 599.5 Q1246.5 595.5 1249.8 595Z" fill="#9c9c9c"/>
<path d="M1281.6 588 V601.5 M1274.5 594.6 H1288.7" stroke="#9c9c9c" stroke-width="1.5"/><path d="M1281.6 586.2 L1284.3 589.2 L1278.9 589.2Z M1281.6 603 L1284.3 600 L1278.9 600Z M1273 594.6 L1276 591.9 L1276 597.3Z M1290.2 594.6 L1287.2 591.9 L1287.2 597.3Z" fill="#9c9c9c"/>
<path d="M1305.5 589.5 V600 H1319 V593.5 L1315 589.5Z" stroke="#9c9c9c" stroke-width="1.5" fill="none"/><path d="M1303.2 587 H1306 M1303.2 602.4 H1306 M1318 587 H1322 M1318 602.4 H1322 M1303.2 587 V590 M1322 599 V602.4" stroke="#9c9c9c" stroke-width="1.2" stroke-dasharray="1.5 1.2"/>
<path d="M1338.5 592.5 V590 A4.5 4.5 0 0 1 1347.5 590 V592.5" stroke="#9c9c9c" stroke-width="1.8" fill="none"/><rect x="1336" y="592.5" width="14" height="9.5" rx="1" fill="#9c9c9c"/><circle cx="1343" cy="597" r="1.5" fill="#535353"/>
<path d="M1171.7 636.4 Q1180.8 625.4 1189.9 636.4 Q1180.8 647.4 1171.7 636.4Z" fill="#e6e6e6"/><circle cx="1180.8" cy="636.4" r="3.6" fill="#505050"/><circle cx="1180" cy="635.4" r="1" fill="#9a9a9a"/>
<path d="M1171.7 674.9 Q1180.8 663.9 1189.9 674.9 Q1180.8 685.9 1171.7 674.9Z" fill="#e6e6e6"/><circle cx="1180.8" cy="674.9" r="3.6" fill="#505050"/><circle cx="1180" cy="673.9" r="1" fill="#9a9a9a"/>
<path d="M1204.5 632 V621.2 H1222 M1236 621.2 H1252.3 V632 M1252.3 642.4 V651 H1236 M1222 651 H1204.5 V642.4" stroke="#ececec" stroke-width="2" fill="none"/>
<path d="M1222 629.7H1235V633.3100000000001H1233.1V631.6H1229.45V641.3000000000001H1232.4V643.2H1224.6V641.3000000000001H1227.55V631.6H1223.9V633.3100000000001H1222Z" fill="#ececec"/>
<path d="M1540 670 V668.5 A3.5 3.5 0 0 1 1547 668.5 V670" stroke="#e0e0e0" stroke-width="1.5" fill="none"/><rect x="1537.2" y="670.2" width="12.8" height="11.5" rx="1" stroke="#e0e0e0" stroke-width="1.5" fill="none"/><circle cx="1543.6" cy="676" r="1.3" fill="#e0e0e0"/>
</svg><svg class="a" style="left:0;top:0" width="1100" height="714">
<rect x="64" y="93" width="1036" height="1.5" fill="#3a3a3a"/>
<rect x="64" y="94.5" width="23" height="23.5" fill="#4f4f4f"/>
<rect x="64" y="110.5" width="23" height="1" fill="#575757"/><rect x="80" y="94" width="1" height="24" fill="#575757"/>
<rect x="92.2" y="115.3" width="1.2" height="2.5" fill="#727272"/>
<rect x="102.0" y="115.3" width="1.2" height="2.5" fill="#727272"/>
<rect x="111.9" y="94.5" width="1" height="23.5" fill="#5c5c5c"/>
<text x="115.4" y="113" font-family="Liberation Sans" font-size="13" letter-spacing="-0.75" fill="#bdbdbd">0</text>
<rect x="121.6" y="115.3" width="1.2" height="2.5" fill="#727272"/>
<rect x="131.4" y="115.3" width="1.2" height="2.5" fill="#727272"/>
<rect x="141.2" y="115.3" width="1.2" height="2.5" fill="#727272"/>
<rect x="151.0" y="115.3" width="1.2" height="2.5" fill="#727272"/>
<rect x="160.9" y="94.5" width="1" height="23.5" fill="#5c5c5c"/>
<text x="164.4" y="113" font-family="Liberation Sans" font-size="13" letter-spacing="-0.75" fill="#bdbdbd">100</text>
<rect x="170.6" y="115.3" width="1.2" height="2.5" fill="#727272"/>
<rect x="180.3" y="115.3" width="1.2" height="2.5" fill="#727272"/>
<rect x="190.1" y="115.3" width="1.2" height="2.5" fill="#727272"/>
<rect x="199.9" y="115.3" width="1.2" height="2.5" fill="#727272"/>
<rect x="209.8" y="94.5" width="1" height="23.5" fill="#5c5c5c"/>
<text x="213.3" y="113" font-family="Liberation Sans" font-size="13" letter-spacing="-0.75" fill="#bdbdbd">200</text>
<rect x="219.5" y="115.3" width="1.2" height="2.5" fill="#727272"/>
<rect x="229.3" y="115.3" width="1.2" height="2.5" fill="#727272"/>
<rect x="239.1" y="115.3" width="1.2" height="2.5" fill="#727272"/>
<rect x="248.9" y="115.3" width="1.2" height="2.5" fill="#727272"/>
<rect x="258.8" y="94.5" width="1" height="23.5" fill="#5c5c5c"/>
<text x="262.3" y="113" font-family="Liberation Sans" font-size="13" letter-spacing="-0.75" fill="#bdbdbd">300</text>
<rect x="268.5" y="115.3" width="1.2" height="2.5" fill="#727272"/>
<rect x="278.3" y="115.3" width="1.2" height="2.5" fill="#727272"/>
<rect x="288.1" y="115.3" width="1.2" height="2.5" fill="#727272"/>
<rect x="297.8" y="115.3" width="1.2" height="2.5" fill="#727272"/>
<rect x="307.7" y="94.5" width="1" height="23.5" fill="#5c5c5c"/>
<text x="311.2" y="113" font-family="Liberation Sans" font-size="13" letter-spacing="-0.75" fill="#bdbdbd">400</text>
<rect x="317.4" y="115.3" width="1.2" height="2.5" fill="#727272"/>
<rect x="327.2" y="115.3" width="1.2" height="2.5" fill="#727272"/>
<rect x="337.0" y="115.3" width="1.2" height="2.5" fill="#727272"/>
<rect x="346.8" y="115.3" width="1.2" height="2.5" fill="#727272"/>
<rect x="356.7" y="94.5" width="1" height="23.5" fill="#5c5c5c"/>
<text x="360.2" y="113" font-family="Liberation Sans" font-size="13" letter-spacing="-0.75" fill="#bdbdbd">500</text>
<rect x="366.4" y="115.3" width="1.2" height="2.5" fill="#727272"/>
<rect x="376.2" y="115.3" width="1.2" height="2.5" fill="#727272"/>
<rect x="386.0" y="115.3" width="1.2" height="2.5" fill="#727272"/>
<rect x="395.8" y="115.3" width="1.2" height="2.5" fill="#727272"/>
<rect x="405.7" y="94.5" width="1" height="23.5" fill="#5c5c5c"/>
<text x="409.2" y="113" font-family="Liberation Sans" font-size="13" letter-spacing="-0.75" fill="#bdbdbd">600</text>
<rect x="415.4" y="115.3" width="1.2" height="2.5" fill="#727272"/>
<rect x="425.1" y="115.3" width="1.2" height="2.5" fill="#727272"/>
<rect x="434.9" y="115.3" width="1.2" height="2.5" fill="#727272"/>
<rect x="444.7" y="115.3" width="1.2" height="2.5" fill="#727272"/>
<rect x="454.6" y="94.5" width="1" height="23.5" fill="#5c5c5c"/>
<text x="458.1" y="113" font-family="Liberation Sans" font-size="13" letter-spacing="-0.75" fill="#bdbdbd">700</text>
<rect x="464.3" y="115.3" width="1.2" height="2.5" fill="#727272"/>
<rect x="474.1" y="115.3" width="1.2" height="2.5" fill="#727272"/>
<rect x="483.9" y="115.3" width="1.2" height="2.5" fill="#727272"/>
<rect x="493.7" y="115.3" width="1.2" height="2.5" fill="#727272"/>
<rect x="503.6" y="94.5" width="1" height="23.5" fill="#5c5c5c"/>
<text x="507.1" y="113" font-family="Liberation Sans" font-size="13" letter-spacing="-0.75" fill="#bdbdbd">800</text>
<rect x="513.3" y="115.3" width="1.2" height="2.5" fill="#727272"/>
<rect x="523.1" y="115.3" width="1.2" height="2.5" fill="#727272"/>
<rect x="532.9" y="115.3" width="1.2" height="2.5" fill="#727272"/>
<rect x="542.6" y="115.3" width="1.2" height="2.5" fill="#727272"/>
<rect x="552.5" y="94.5" width="1" height="23.5" fill="#5c5c5c"/>
<text x="556.0" y="113" font-family="Liberation Sans" font-size="13" letter-spacing="-0.75" fill="#bdbdbd">900</text>
<rect x="562.2" y="115.3" width="1.2" height="2.5" fill="#727272"/>
<rect x="572.0" y="115.3" width="1.2" height="2.5" fill="#727272"/>
<rect x="581.8" y="115.3" width="1.2" height="2.5" fill="#727272"/>
<rect x="591.6" y="115.3" width="1.2" height="2.5" fill="#727272"/>
<rect x="601.5" y="94.5" width="1" height="23.5" fill="#5c5c5c"/>
<text x="605.0" y="113" font-family="Liberation Sans" font-size="13" letter-spacing="-0.75" fill="#bdbdbd">1000</text>
<rect x="611.2" y="115.3" width="1.2" height="2.5" fill="#727272"/>
<rect x="621.0" y="115.3" width="1.2" height="2.5" fill="#727272"/>
<rect x="630.8" y="115.3" width="1.2" height="2.5" fill="#727272"/>
<rect x="640.6" y="115.3" width="1.2" height="2.5" fill="#727272"/>
<rect x="650.5" y="94.5" width="1" height="23.5" fill="#5c5c5c"/>
<text x="654.0" y="113" font-family="Liberation Sans" font-size="13" letter-spacing="-0.75" fill="#bdbdbd">1100</text>
<rect x="660.2" y="115.3" width="1.2" height="2.5" fill="#727272"/>
<rect x="669.9" y="115.3" width="1.2" height="2.5" fill="#727272"/>
<rect x="679.7" y="115.3" width="1.2" height="2.5" fill="#727272"/>
<rect x="689.5" y="115.3" width="1.2" height="2.5" fill="#727272"/>
<rect x="699.4" y="94.5" width="1" height="23.5" fill="#5c5c5c"/>
<text x="702.9" y="113" font-family="Liberation Sans" font-size="13" letter-spacing="-0.75" fill="#bdbdbd">1200</text>
<rect x="709.1" y="115.3" width="1.2" height="2.5" fill="#727272"/>
<rect x="718.9" y="115.3" width="1.2" height="2.5" fill="#727272"/>
<rect x="728.7" y="115.3" width="1.2" height="2.5" fill="#727272"/>
<rect x="738.5" y="115.3" width="1.2" height="2.5" fill="#727272"/>
<rect x="748.4" y="94.5" width="1" height="23.5" fill="#5c5c5c"/>
<text x="751.9" y="113" font-family="Liberation Sans" font-size="13" letter-spacing="-0.75" fill="#bdbdbd">1300</text>
<rect x="758.1" y="115.3" width="1.2" height="2.5" fill="#727272"/>
<rect x="767.9" y="115.3" width="1.2" height="2.5" fill="#727272"/>
<rect x="777.7" y="115.3" width="1.2" height="2.5" fill="#727272"/>
<rect x="787.4" y="115.3" width="1.2" height="2.5" fill="#727272"/>
<rect x="797.3" y="94.5" width="1" height="23.5" fill="#5c5c5c"/>
<text x="800.8" y="113" font-family="Liberation Sans" font-size="13" letter-spacing="-0.75" fill="#bdbdbd">1400</text>
<rect x="807.0" y="115.3" width="1.2" height="2.5" fill="#727272"/>
<rect x="816.8" y="115.3" width="1.2" height="2.5" fill="#727272"/>
<rect x="826.6" y="115.3" width="1.2" height="2.5" fill="#727272"/>
<rect x="836.4" y="115.3" width="1.2" height="2.5" fill="#727272"/>
<rect x="846.3" y="94.5" width="1" height="23.5" fill="#5c5c5c"/>
<text x="849.8" y="113" font-family="Liberation Sans" font-size="13" letter-spacing="-0.75" fill="#bdbdbd">1500</text>
<rect x="856.0" y="115.3" width="1.2" height="2.5" fill="#727272"/>
<rect x="865.8" y="115.3" width="1.2" height="2.5" fill="#727272"/>
<rect x="875.6" y="115.3" width="1.2" height="2.5" fill="#727272"/>
<rect x="885.4" y="115.3" width="1.2" height="2.5" fill="#727272"/>
<rect x="895.3" y="94.5" width="1" height="23.5" fill="#5c5c5c"/>
<text x="898.8" y="113" font-family="Liberation Sans" font-size="13" letter-spacing="-0.75" fill="#bdbdbd">1600</text>
<rect x="905.0" y="115.3" width="1.2" height="2.5" fill="#727272"/>
<rect x="914.7" y="115.3" width="1.2" height="2.5" fill="#727272"/>
<rect x="924.5" y="115.3" width="1.2" height="2.5" fill="#727272"/>
<rect x="934.3" y="115.3" width="1.2" height="2.5" fill="#727272"/>
<rect x="944.2" y="94.5" width="1" height="23.5" fill="#5c5c5c"/>
<text x="947.7" y="113" font-family="Liberation Sans" font-size="13" letter-spacing="-0.75" fill="#bdbdbd">1700</text>
<rect x="953.9" y="115.3" width="1.2" height="2.5" fill="#727272"/>
<rect x="963.7" y="115.3" width="1.2" height="2.5" fill="#727272"/>
<rect x="973.5" y="115.3" width="1.2" height="2.5" fill="#727272"/>
<rect x="983.3" y="115.3" width="1.2" height="2.5" fill="#727272"/>
<rect x="993.2" y="94.5" width="1" height="23.5" fill="#5c5c5c"/>
<text x="996.7" y="113" font-family="Liberation Sans" font-size="13" letter-spacing="-0.75" fill="#bdbdbd">1800</text>
<rect x="1002.9" y="115.3" width="1.2" height="2.5" fill="#727272"/>
<rect x="1012.7" y="115.3" width="1.2" height="2.5" fill="#727272"/>
<rect x="1022.5" y="115.3" width="1.2" height="2.5" fill="#727272"/>
<rect x="1032.2" y="115.3" width="1.2" height="2.5" fill="#727272"/>
<rect x="1042.1" y="94.5" width="1" height="23.5" fill="#5c5c5c"/>
<text x="1045.6" y="113" font-family="Liberation Sans" font-size="13" letter-spacing="-0.75" fill="#bdbdbd">1900</text>
<rect x="1051.8" y="115.3" width="1.2" height="2.5" fill="#727272"/>
<rect x="1061.6" y="115.3" width="1.2" height="2.5" fill="#727272"/>
<rect x="1071.4" y="115.3" width="1.2" height="2.5" fill="#727272"/>
<text x="74.6" y="127.4" text-anchor="middle" font-family="Liberation Sans" font-size="11.5" fill="#bdbdbd">0</text>
<text x="74.6" y="138.8" text-anchor="middle" font-family="Liberation Sans" font-size="11.5" fill="#bdbdbd">0</text>
<rect x="84.5" y="124.0" width="2.5" height="1.2" fill="#727272"/>
<rect x="84.5" y="133.8" width="2.5" height="1.2" fill="#727272"/>
<rect x="84.5" y="143.6" width="2.5" height="1.2" fill="#727272"/>
<rect x="64" y="153.5" width="23" height="1" fill="#5c5c5c"/>
<text x="74.6" y="165.0" text-anchor="middle" font-family="Liberation Sans" font-size="11.5" fill="#bdbdbd">0</text>
<rect x="84.5" y="163.2" width="2.5" height="1.2" fill="#727272"/>
<rect x="84.5" y="173.0" width="2.5" height="1.2" fill="#727272"/>
<rect x="84.5" y="182.8" width="2.5" height="1.2" fill="#727272"/>
<rect x="84.5" y="192.6" width="2.5" height="1.2" fill="#727272"/>
<rect x="64" y="202.5" width="23" height="1" fill="#5c5c5c"/>
<text x="74.6" y="214.0" text-anchor="middle" font-family="Liberation Sans" font-size="11.5" fill="#bdbdbd">1</text>
<text x="74.6" y="225.4" text-anchor="middle" font-family="Liberation Sans" font-size="11.5" fill="#bdbdbd">0</text>
<text x="74.6" y="236.8" text-anchor="middle" font-family="Liberation Sans" font-size="11.5" fill="#bdbdbd">0</text>
<rect x="84.5" y="212.2" width="2.5" height="1.2" fill="#727272"/>
<rect x="84.5" y="221.9" width="2.5" height="1.2" fill="#727272"/>
<rect x="84.5" y="231.7" width="2.5" height="1.2" fill="#727272"/>
<rect x="84.5" y="241.5" width="2.5" height="1.2" fill="#727272"/>
<rect x="64" y="251.4" width="23" height="1" fill="#5c5c5c"/>
<text x="74.6" y="262.9" text-anchor="middle" font-family="Liberation Sans" font-size="11.5" fill="#bdbdbd">2</text>
<text x="74.6" y="274.3" text-anchor="middle" font-family="Liberation Sans" font-size="11.5" fill="#bdbdbd">0</text>
<text x="74.6" y="285.7" text-anchor="middle" font-family="Liberation Sans" font-size="11.5" fill="#bdbdbd">0</text>
<rect x="84.5" y="261.1" width="2.5" height="1.2" fill="#727272"/>
<rect x="84.5" y="270.9" width="2.5" height="1.2" fill="#727272"/>
<rect x="84.5" y="280.7" width="2.5" height="1.2" fill="#727272"/>
<rect x="84.5" y="290.5" width="2.5" height="1.2" fill="#727272"/>
<rect x="64" y="300.4" width="23" height="1" fill="#5c5c5c"/>
<text x="74.6" y="311.9" text-anchor="middle" font-family="Liberation Sans" font-size="11.5" fill="#bdbdbd">3</text>
<text x="74.6" y="323.3" text-anchor="middle" font-family="Liberation Sans" font-size="11.5" fill="#bdbdbd">0</text>
<text x="74.6" y="334.7" text-anchor="middle" font-family="Liberation Sans" font-size="11.5" fill="#bdbdbd">0</text>
<rect x="84.5" y="310.1" width="2.5" height="1.2" fill="#727272"/>
<rect x="84.5" y="319.9" width="2.5" height="1.2" fill="#727272"/>
<rect x="84.5" y="329.7" width="2.5" height="1.2" fill="#727272"/>
<rect x="84.5" y="339.4" width="2.5" height="1.2" fill="#727272"/>
<rect x="64" y="349.3" width="23" height="1" fill="#5c5c5c"/>
<text x="74.6" y="360.8" text-anchor="middle" font-family="Liberation Sans" font-size="11.5" fill="#bdbdbd">4</text>
<text x="74.6" y="372.2" text-anchor="middle" font-family="Liberation Sans" font-size="11.5" fill="#bdbdbd">0</text>
<text x="74.6" y="383.6" text-anchor="middle" font-family="Liberation Sans" font-size="11.5" fill="#bdbdbd">0</text>
<rect x="84.5" y="359.0" width="2.5" height="1.2" fill="#727272"/>
<rect x="84.5" y="368.8" width="2.5" height="1.2" fill="#727272"/>
<rect x="84.5" y="378.6" width="2.5" height="1.2" fill="#727272"/>
<rect x="84.5" y="388.4" width="2.5" height="1.2" fill="#727272"/>
<rect x="64" y="398.3" width="23" height="1" fill="#5c5c5c"/>
<text x="74.6" y="409.8" text-anchor="middle" font-family="Liberation Sans" font-size="11.5" fill="#bdbdbd">5</text>
<text x="74.6" y="421.2" text-anchor="middle" font-family="Liberation Sans" font-size="11.5" fill="#bdbdbd">0</text>
<text x="74.6" y="432.6" text-anchor="middle" font-family="Liberation Sans" font-size="11.5" fill="#bdbdbd">0</text>
<rect x="84.5" y="408.0" width="2.5" height="1.2" fill="#727272"/>
<rect x="84.5" y="417.8" width="2.5" height="1.2" fill="#727272"/>
<rect x="84.5" y="427.6" width="2.5" height="1.2" fill="#727272"/>
<rect x="84.5" y="437.4" width="2.5" height="1.2" fill="#727272"/>
<rect x="64" y="447.3" width="23" height="1" fill="#5c5c5c"/>
<text x="74.6" y="458.8" text-anchor="middle" font-family="Liberation Sans" font-size="11.5" fill="#bdbdbd">6</text>
<text x="74.6" y="470.2" text-anchor="middle" font-family="Liberation Sans" font-size="11.5" fill="#bdbdbd">0</text>
<text x="74.6" y="481.6" text-anchor="middle" font-family="Liberation Sans" font-size="11.5" fill="#bdbdbd">0</text>
<rect x="84.5" y="457.0" width="2.5" height="1.2" fill="#727272"/>
<rect x="84.5" y="466.7" width="2.5" height="1.2" fill="#727272"/>
<rect x="84.5" y="476.5" width="2.5" height="1.2" fill="#727272"/>
<rect x="84.5" y="486.3" width="2.5" height="1.2" fill="#727272"/>
<rect x="64" y="496.2" width="23" height="1" fill="#5c5c5c"/>
<text x="74.6" y="507.7" text-anchor="middle" font-family="Liberation Sans" font-size="11.5" fill="#bdbdbd">7</text>
<text x="74.6" y="519.1" text-anchor="middle" font-family="Liberation Sans" font-size="11.5" fill="#bdbdbd">0</text>
<text x="74.6" y="530.5" text-anchor="middle" font-family="Liberation Sans" font-size="11.5" fill="#bdbdbd">0</text>
<rect x="84.5" y="505.9" width="2.5" height="1.2" fill="#727272"/>
<rect x="84.5" y="515.7" width="2.5" height="1.2" fill="#727272"/>
<rect x="84.5" y="525.5" width="2.5" height="1.2" fill="#727272"/>
<rect x="84.5" y="535.3" width="2.5" height="1.2" fill="#727272"/>
<rect x="64" y="545.2" width="23" height="1" fill="#5c5c5c"/>
<text x="74.6" y="556.7" text-anchor="middle" font-family="Liberation Sans" font-size="11.5" fill="#bdbdbd">8</text>
<text x="74.6" y="568.1" text-anchor="middle" font-family="Liberation Sans" font-size="11.5" fill="#bdbdbd">0</text>
<text x="74.6" y="579.5" text-anchor="middle" font-family="Liberation Sans" font-size="11.5" fill="#bdbdbd">0</text>
<rect x="84.5" y="554.9" width="2.5" height="1.2" fill="#727272"/>
<rect x="84.5" y="564.7" width="2.5" height="1.2" fill="#727272"/>
<rect x="84.5" y="574.5" width="2.5" height="1.2" fill="#727272"/>
<rect x="84.5" y="584.2" width="2.5" height="1.2" fill="#727272"/>
<rect x="64" y="594.1" width="23" height="1" fill="#5c5c5c"/>
<text x="74.6" y="605.6" text-anchor="middle" font-family="Liberation Sans" font-size="11.5" fill="#bdbdbd">9</text>
<text x="74.6" y="617.0" text-anchor="middle" font-family="Liberation Sans" font-size="11.5" fill="#bdbdbd">0</text>
<text x="74.6" y="628.4" text-anchor="middle" font-family="Liberation Sans" font-size="11.5" fill="#bdbdbd">0</text>
<rect x="84.5" y="603.8" width="2.5" height="1.2" fill="#727272"/>
<rect x="84.5" y="613.6" width="2.5" height="1.2" fill="#727272"/>
<rect x="84.5" y="623.4" width="2.5" height="1.2" fill="#727272"/>
<rect x="84.5" y="633.2" width="2.5" height="1.2" fill="#727272"/>
<rect x="64" y="643.1" width="23" height="1" fill="#5c5c5c"/>
<text x="74.6" y="654.6" text-anchor="middle" font-family="Liberation Sans" font-size="11.5" fill="#bdbdbd">1</text>
<text x="74.6" y="666.0" text-anchor="middle" font-family="Liberation Sans" font-size="11.5" fill="#bdbdbd">0</text>
<text x="74.6" y="677.4" text-anchor="middle" font-family="Liberation Sans" font-size="11.5" fill="#bdbdbd">0</text>
<text x="74.6" y="688.8" text-anchor="middle" font-family="Liberation Sans" font-size="11.5" fill="#bdbdbd">0</text>
<rect x="84.5" y="652.8" width="2.5" height="1.2" fill="#727272"/>
<rect x="84.5" y="662.6" width="2.5" height="1.2" fill="#727272"/>
<rect x="84.5" y="672.4" width="2.5" height="1.2" fill="#727272"/>
<rect x="84.5" y="682.2" width="2.5" height="1.2" fill="#727272"/>
<rect x="64" y="692.1" width="23" height="1" fill="#5c5c5c"/>
<text x="74.6" y="703.6" text-anchor="middle" font-family="Liberation Sans" font-size="11.5" fill="#bdbdbd">1</text>
<text x="74.6" y="715.0" text-anchor="middle" font-family="Liberation Sans" font-size="11.5" fill="#bdbdbd">1</text>
<text x="74.6" y="726.4" text-anchor="middle" font-family="Liberation Sans" font-size="11.5" fill="#bdbdbd">0</text>
<text x="74.6" y="737.8" text-anchor="middle" font-family="Liberation Sans" font-size="11.5" fill="#bdbdbd">0</text>
<rect x="84.5" y="701.8" width="2.5" height="1.2" fill="#727272"/>
<rect x="84.5" y="711.5" width="2.5" height="1.2" fill="#727272"/>
<path d="M1085.5 111 L1089.5 107 L1093.5 111" stroke="#c8c8c8" stroke-width="1.4" fill="none"/>
</svg>
<div class="t" style="left:78px;top:65px;font-size:15px;font-weight:bold;color:#f2f2f2;letter-spacing:0.18px">Untitled-1 @ 88,4% (GRADIENT, RGB/8#) *</div>
<svg class="a" style="left:393px;top:70px" width="10" height="10"><path d="M1 1 L9 9 M9 1 L1 9" stroke="#cfcfcf" stroke-width="1.5"/></svg><svg class="a" style="left:0;top:0" width="70" height="714">
<path d="M14 59 L18 62.3 L14 65.6 M19 59 L23 62.3 L19 65.6" stroke="#d0d0d0" stroke-width="1.2" fill="none"/>
<rect x="18.60" y="75.8" width="1.4" height="5" fill="#444444"/>
<rect x="21.35" y="75.8" width="1.4" height="5" fill="#444444"/>
<rect x="24.10" y="75.8" width="1.4" height="5" fill="#444444"/>
<rect x="26.85" y="75.8" width="1.4" height="5" fill="#444444"/>
<rect x="29.60" y="75.8" width="1.4" height="5" fill="#444444"/>
<rect x="32.35" y="75.8" width="1.4" height="5" fill="#444444"/>
<rect x="35.10" y="75.8" width="1.4" height="5" fill="#444444"/>
<rect x="37.85" y="75.8" width="1.4" height="5" fill="#444444"/>
<rect x="40.60" y="75.8" width="1.4" height="5" fill="#444444"/>
<rect x="43.35" y="75.8" width="1.4" height="5" fill="#444444"/>
<g stroke="#dcdcdc" stroke-width="1.8" fill="none"><path d="M32.8 104 V121 M24 112.3 H41.6"/></g>
<path d="M32.8 101.8 L36.5 106.2 L29.1 106.2 Z M32.8 123 L36.5 118.6 L29.1 118.6 Z M22.3 112.3 L26.7 108.6 L26.7 116 Z M43.4 112.3 L39 108.6 L39 116 Z" fill="#dcdcdc"/>
<g stroke="#dcdcdc" stroke-width="1.9" fill="none"><path d="M20 141.3 H24 M26.4 136.2 V153.8 H38 M29.5 141.3 H39.2 V160 M41 153.8 H45"/></g>
<path d="M50.8 156.5 L50.8 160.7 L46.6 160.7 Z" fill="#cfcfcf"/>
<g transform="rotate(45 33 183)"><rect x="30.6" y="184" width="4.8" height="13" rx="2.4" stroke="#dcdcdc" stroke-width="1.6" fill="none"/><rect x="27.8" y="179.6" width="10.4" height="4.6" fill="#dcdcdc"/><rect x="30.3" y="168.8" width="5.4" height="12" rx="2.7" fill="#dcdcdc"/></g>
<path d="M50.8 192 L50.8 196.2 L46.6 196.2 Z" fill="#cfcfcf"/>
<path d="M21.4 220.5 L31.6 210.4 L42.4 220 L32.1 230.2 Z" stroke="#dcdcdc" stroke-width="1.8" fill="none" stroke-linejoin="round"/>
<path d="M26.3 215.6 Q24.6 206.5 29.3 206.3 Q32.6 206.6 33.6 218" stroke="#dcdcdc" stroke-width="1.5" fill="none"/><circle cx="33.6" cy="218.6" r="1.7" fill="#dcdcdc"/><path d="M43.4 221.3 Q46.3 225.5 45.5 227 A2.3 2.3 0 0 1 41.3 227 Q40.6 225.5 43.4 221.3Z" fill="#dcdcdc"/>
<path d="M50.8 228 L50.8 232.2 L46.6 232.2 Z" fill="#cfcfcf"/>
<rect x="23.2" y="247.4" width="19.8" height="16.5" stroke="#dcdcdc" stroke-width="1.8" fill="none" stroke-dasharray="3.6 2.4" stroke-dashoffset="1"/>
<path d="M50.8 264 L50.8 268.2 L46.6 268.2 Z" fill="#cfcfcf"/>
<path d="M22.5 284 L34 290 L43.5 279.5 L43 293 L32 297" stroke="#dcdcdc" stroke-width="1.7" fill="none" stroke-linejoin="miter"/><circle cx="30.7" cy="295.5" r="2.2" stroke="#dcdcdc" stroke-width="1.5" fill="none"/><path d="M28.6 296.8 L23 300.5 M31 297.7 L28.5 302" stroke="#dcdcdc" stroke-width="1.6"/>
<path d="M50.8 299.5 L50.8 303.7 L46.6 303.7 Z" fill="#cfcfcf"/>
<ellipse cx="26.8" cy="328.5" rx="5.2" ry="8.8" stroke="#dcdcdc" stroke-width="1.7" fill="none" stroke-dasharray="1.5 1.6"/>
<path d="M45.5 318.3 L42 327.5 L37.8 325 Z" fill="#dcdcdc"/><path d="M37.2 325.5 Q33 326 31.8 333 Q31 337 31.5 338.3 Q36 337 39 333 Q41.5 330 41 328 Z" fill="#dcdcdc"/>
<path d="M50.8 337 L50.8 341.2 L46.6 341.2 Z" fill="#cfcfcf"/>
<path d="M21 372.3 Q27 367 36 360.5 L39.8 364 Q30 369 21 372.3Z" fill="#dcdcdc"/><path d="M33.5 359.5 L36.8 355.4 L44.6 355.4 L40.5 364 Z" fill="#9e9e9e"/>
<path d="M50.8 373 L50.8 377.2 L46.6 377.2 Z" fill="#cfcfcf"/>
<path d="M43.8 387.7 Q42 393 36.8 399.5 L34 397 Q39.5 390.5 43.8 387.7Z" fill="#dcdcdc"/><path d="M33.3 397.5 L36.2 400.3 Q35.5 406 30 408.3 Q26 409.5 23.5 409.2 Q25.5 406.5 26 403 Q27 398.5 33.3 397.5Z" fill="#dcdcdc"/>
<path d="M50.8 407.5 L50.8 411.7 L46.6 411.7 Z" fill="#cfcfcf"/>
<g transform="rotate(-45 33.5 435)"><rect x="23" y="430" width="21" height="10" rx="1.5" fill="#dcdcdc"/><rect x="29" y="430" width="9" height="10" fill="#535353"/><g fill="#dcdcdc"><rect x="29.6" y="430.6" width="1.6" height="1.6"/><rect x="29.6" y="433.8" width="1.6" height="1.6"/><rect x="29.6" y="437.0" width="1.6" height="1.6"/><rect x="32.4" y="430.6" width="1.6" height="1.6"/><rect x="32.4" y="433.8" width="1.6" height="1.6"/><rect x="32.4" y="437.0" width="1.6" height="1.6"/><rect x="35.2" y="430.6" width="1.6" height="1.6"/><rect x="35.2" y="433.8" width="1.6" height="1.6"/><rect x="35.2" y="437.0" width="1.6" height="1.6"/></g></g>
<path d="M22 433 Q21.5 425 28.5 423.3" stroke="#dcdcdc" stroke-width="1.5" fill="none" stroke-dasharray="1.3 1.5"/>
<path d="M50.8 443 L50.8 447.2 L46.6 447.2 Z" fill="#cfcfcf"/>
<circle cx="32.8" cy="463.3" r="3.6" fill="#dcdcdc"/><rect x="31.3" y="465" width="3" height="5" fill="#dcdcdc"/><path d="M24 471.3 Q24 469.5 26.5 469.5 H39.5 Q42 469.5 42 471.3 V476.8 H24Z" fill="#dcdcdc"/><rect x="24.3" y="479.3" width="17.5" height="1.8" fill="#dcdcdc"/>
<path d="M50.8 480 L50.8 484.2 L46.6 484.2 Z" fill="#cfcfcf"/>
<g transform="rotate(-40 33 507.5)"><rect x="25.5" y="502.5" width="18" height="10" fill="#dcdcdc"/><rect x="19" y="503.4" width="7" height="8.2" stroke="#dcdcdc" stroke-width="1.6" fill="none"/></g><rect x="30.5" y="515" width="12.5" height="1.6" fill="#dcdcdc"/>
<rect x="12" y="525" width="42" height="36" rx="2" fill="#383838"/>
<rect x="12" y="525" width="42" height="36" rx="2" fill="none" stroke="#5a5a5a" stroke-width="1"/>
<path d="M24 534 H43.5 V540.5 H41.2 V536.4 H35 V550.6 H38.6 V553 H28.9 V550.6 H32.5 V536.4 H26.3 V540.5 H24 Z" fill="#ececec"/>
<path d="M50.8 552 L50.8 556.2 L46.6 556.2 Z" fill="#cfcfcf"/>
<rect x="8.3" y="521.3" width="49.6" height="43.4" fill="none" stroke="#e3000f" stroke-width="6.6"/>
<path d="M26.3 573.5 Q26 568.6 31 568.3 H41.2 Q42.8 570.5 42.4 576 Q41.6 581.5 35.8 583.5 Q34.2 583.9 34.8 582.2 L38.2 576.8 L33.8 575.8 L29.5 581 Q26.8 578 26.3 573.5Z" fill="#dcdcdc"/><path d="M33 576 L26.2 587.3" stroke="#dcdcdc" stroke-width="3.6" stroke-linecap="round"/>
<path d="M36.5 605.1 L43.6 610.9 L40.6 614.2 L33.4 608.4Z" fill="#dcdcdc"/><path d="M33.1 609.6 L27.5 612 L24.2 623.4 L35.2 620.3 L39.6 614.9 Z" stroke="#dcdcdc" stroke-width="1.6" fill="none" stroke-linejoin="round"/><circle cx="32.6" cy="615.5" r="1.8" fill="#dcdcdc"/><path d="M32 616.3 L24.8 622.8" stroke="#dcdcdc" stroke-width="1.1"/>
<path d="M50.8 623.5 L50.8 627.7 L46.6 627.7 Z" fill="#cfcfcf"/>
<path d="M25.5 639.4 L39.8 652.6 L34.3 653 L37.8 660 L35 661.3 L31.7 654.3 L26 658.8 Z" fill="#dcdcdc"/>
<path d="M50.8 659.5 L50.8 663.7 L46.6 663.7 Z" fill="#cfcfcf"/>
<rect x="22.8" y="678.4" width="20.3" height="15.4" fill="#6a6a6a" stroke="#dcdcdc" stroke-width="1.8"/>
<path d="M50.8 695 L50.8 699.2 L46.6 699.2 Z" fill="#cfcfcf"/>
</svg><!-- GRADIENT text -->
<svg class="a" style="left:0;top:0" width="1600" height="714" viewBox="0 0 1600 714">
<g fill="#fff" fill-rule="evenodd">
<path d="M252.6 347.7 C247 334 234 327 216 327 C191 327 178 341 178 365 C178 390 192 402.6 216 402.6 C230 402.6 243 398 253.5 390.6 L253.5 359.1 L217.9 359.1 L217.9 374.9 L233.7 374.9 L233.7 381.8 C229 385 223 386.2 218 386.2 C207 386.2 201.5 377 201.5 365 C201.5 352 208 343.3 217 343.3 C224 343.3 229 346.5 230.5 351.5 Z"/>
<path d="M270.7 328.2 L314 328.2 C328 328.2 337 338 337 350.5 C337 360 331 367 322 369 C326 372 330 377 333 383 L345 401.3 L315.5 401.3 L304 378 C301 373 298 371 293.4 371 L293.4 401.3 L270.7 401.3 Z M293.4 342.7 L311 342.7 C314 342.7 315 346 315 350 C315 355 313 357.8 309 357.8 L293.4 357.8 Z"/>
<path d="M344.6 401.3 L371.6 328.2 L400 328.2 L426.3 401.3 L402 401.3 L398.6 389.4 L373.9 389.4 L370.4 401.3 Z M385.5 348.5 L394 373.2 L378.5 373.2 Z"/>
<path d="M437.3 328.2 L474 328.2 C494 328.2 505.7 344 505.7 364.8 C505.7 386 494 401.3 479 401.3 L437.3 401.3 Z M460.3 345.2 L470.4 345.2 C478 345.2 482.3 352 482.3 364.8 C482.3 378 478 384.6 470.4 384.6 L460.3 384.6 Z"/>
<path d="M521.8 328.2 L544.5 328.2 L544.5 401.3 L521.8 401.3 Z"/>
<path d="M563.8 328.2 L625.4 328.2 L625.4 344 L587.2 344 L587.2 356 L622.5 356 L622.5 370.4 L587.2 370.4 L587.2 384.6 L626.2 384.6 L626.2 401.3 L563.8 401.3 Z"/>
<path d="M641.9 328.2 L664.3 328.2 L691.2 368.6 L691.2 328.2 L712.8 328.2 L712.8 401.3 L690.5 401.3 L663.5 360.8 L663.5 401.3 L641.9 401.3 Z"/>
<path d="M726 328.1 L795.3 328.1 L795.3 346.6 L772.1 346.6 L772.1 401.3 L749 401.3 L749 346.6 L726 346.6 Z"/>
</g>
<rect x="172" y="400.6" width="628" height="1.2" fill="#b4b4b4"/>
<rect x="721.2" y="314" width="1.1" height="119" fill="#a8a8a8"/>
<circle cx="485.5" cy="401.5" r="1.8" fill="#fff"/>
</svg>
</body></html>
